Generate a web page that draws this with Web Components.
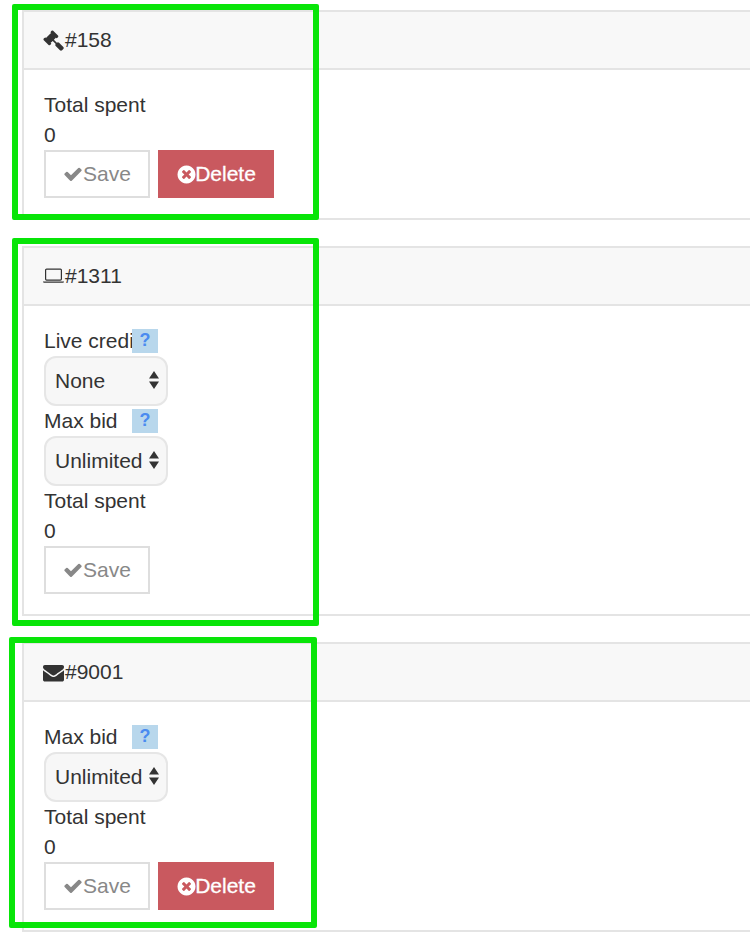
<!DOCTYPE html>
<html>
<head>
<meta charset="utf-8">
<style>
    html, body { margin: 0; background: #fff; }
    body { font: 21px/30px "Liberation Sans", Arial, sans-serif; color: #333; }
</style>
</head>
<body>
<budget-page>
    <budget-panel number="158" icon="gavel">
        <stat-block label="Total spent" value="0"></stat-block>
        <button-row>
            <action-button icon="check">Save</action-button>
            <action-button icon="cross" danger>Delete</action-button>
        </button-row>
        <green-mark x="-12" y="-8" w="307" h="216"></green-mark>
    </budget-panel>
    <budget-panel number="1311" icon="laptop">
        <help-label>Live credit</help-label>
        <select-box>None</select-box>
        <help-label>Max bid</help-label>
        <select-box>Unlimited</select-box>
        <stat-block label="Total spent" value="0"></stat-block>
        <button-row>
            <action-button icon="check">Save</action-button>
        </button-row>
        <green-mark x="-12" y="-10" w="307" h="388"></green-mark>
    </budget-panel>
    <budget-panel number="9001" icon="envelope">
        <help-label>Max bid</help-label>
        <select-box>Unlimited</select-box>
        <stat-block label="Total spent" value="0"></stat-block>
        <button-row>
            <action-button icon="check">Save</action-button>
            <action-button icon="cross" danger>Delete</action-button>
        </button-row>
        <green-mark x="-15" y="-7" w="308" h="291"></green-mark>
    </budget-panel>
</budget-page>

<script>
const ICONS = {
    gavel: '<svg viewBox="0 0 1792 1792" width="21" height="21"><path fill="currentColor" d="M1771 1536q0 53-37 90l-107 108q-39 37-91 37-53 0-90-37l-363-364q-38-36-38-90 0-53 43-96l-256-256-126 126q-14 14-34 14t-34-14q2 2 12.5 12t12.5 13 10 11.5 10 13.5 6 13.5 5.5 16.5 1.5 18q0 38-28 68-3 3-16.5 18t-19 20.5-18.5 16.5-22 15.5-22 9-26 4.5q-40 0-68-28l-408-408q-28-28-28-68 0-13 4.5-26t9-22 15.5-22 16.5-18.5 20.5-19 18-16.5q30-28 68-28 10 0 18 1.5t16.5 5.5 13.5 6 13.5 10 11.5 10 13 12.5 12 12.5q-14-14-14-34t14-34l348-348q14-14 34-14t34 14q-2-2-12.5-12t-12.5-13-10-11.5-10-13.5-6-13.5-5.5-16.5-1.5-18q0-38 28-68 3-3 16.5-18t19-20.5 18.5-16.5 22-15.5 22-9 26-4.5q40 0 68 28l408 408q28 28 28 68 0 13-4.5 26t-9 22-15.5 22-16.5 18.5-20.5 19-18 16.5q-30 28-68 28-10 0-18-1.5t-16.5-5.5-13.5-6-13.5-10-11.5-10-13-12.5-12-12.5q14 14 14 34t-14 34l-126 126 256 256q43-43 96-43 52 0 91 37l363 363q37 39 37 91z"/></svg>',
    laptop: '<svg viewBox="0 0 21 16" width="21" height="16"><rect x="2.6" y="1.1" width="15.8" height="11" rx="1" fill="none" stroke="currentColor" stroke-width="1.2"/><path d="M0 13.4h21v.3q0 1-1.2 1H1.2q-1.2 0-1.2-1z" fill="currentColor"/></svg>',
    envelope: '<svg viewBox="0 0 1792 1792" width="21" height="21"><path fill="currentColor" d="M1792 710v794q0 66-47 113t-113 47h-1472q-66 0-113-47t-47-113v-794q44 49 101 87 362 246 497 345 57 42 92.5 65.5t94.5 48 110 24.5h2q51 0 110-24.5t94.5-48 92.5-65.5q170-123 498-345 57-39 100-87zm0-294q0 79-49 151t-122 123q-376 261-468 325-10 7-42.5 30.5t-54 38-52 32.5-57.5 27-50 9h-2q-23 0-50-9t-57.5-27-52-32.5-54-38-42.5-30.5q-91-64-262-182.5t-205-142.5q-62-42-117-115.5t-55-136.5q0-78 41.5-130t118.5-52h1472q65 0 112.5 47t47.5 113z"/></svg>',
    check: '<svg viewBox="0 0 1792 1792" width="20" height="20"><path fill="currentColor" d="M1671 566q0 40-28 68l-724 724-136 136q-28 28-68 28t-68-28l-136-136-362-362q-28-28-28-68t28-68l136-136q28-28 68-28t68 28l294 295 656-657q28-28 68-28t68 28l136 136q28 28 28 68z"/></svg>',
    cross: '<svg viewBox="0 0 1792 1792" width="21" height="21"><path fill="currentColor" d="M1277 1122q0-26-19-45l-181-181 181-181q19-19 19-45 0-27-19-46l-90-90q-19-19-46-19-26 0-45 19l-181 181-181-181q-19-19-45-19-27 0-46 19l-90 90q-19 19-19 46 0 26 19 45l181 181-181 181q-19 19-19 45 0 27 19 46l90 90q19 19 46 19 26 0 45-19l181-181 181 181q19 19 45 19 27 0 46-19l90-90q19-19 19-46zm387-226q0 209-103 385.5t-279.5 279.5-385.5 103-385.5-103-279.5-279.5-103-385.5 103-385.5 279.5-279.5 385.5-103 385.5 103 279.5 279.5 103 385.5z"/></svg>',
    arrows: '<svg viewBox="0 0 10 18" width="10" height="18"><path fill="currentColor" d="M5 0l5 7.5H0zM5 18L0 10.5h10z"/></svg>'
};

class BudgetPage extends HTMLElement {
    constructor() {
        super();
        this.attachShadow({ mode: "open" });
        this.shadowRoot.innerHTML = `
            <style>
                :host {
                    display: flex;
                    flex-direction: column;
                    gap: 26px;
                    padding: 10px 0 0 22px;
                }
            </style>
            <slot></slot>
        `;
    }
}

class BudgetPanel extends HTMLElement {
    constructor() {
        super();
        this.attachShadow({ mode: "open" });
        const icon = ICONS[this.getAttribute("icon")];
        this.shadowRoot.innerHTML = `
            <style>
                :host {
                    display: block;
                    position: relative;
                    border: 2px solid #e4e4e4;
                    border-right: 0;
                    background: #fff;
                }
                header {
                    display: flex;
                    align-items: center;
                    height: 56px;
                    padding-left: 20px;
                    background: #f8f8f8;
                    border-bottom: 2px solid #e4e4e4;
                    color: #333;
                }
                .icon { display: flex; width: 21px; margin-left: -1px; margin-right: 1px; }
                main { padding: 20px; }
            </style>
            <header>
                <span class="icon">${icon}</span>
                <span>#${this.getAttribute("number")}</span>
            </header>
            <main><slot></slot></main>
        `;
    }
}

class HelpLabel extends HTMLElement {
    constructor() {
        super();
        this.attachShadow({ mode: "open" });
        this.shadowRoot.innerHTML = `
            <style>
                :host {
                    display: flex;
                    align-items: center;
                    height: 30px;
                }
                .text {
                    width: 88px;
                    overflow: hidden;
                    white-space: nowrap;
                }
                .help {
                    width: 26px;
                    height: 24px;
                    background: #b8d7ec;
                    color: #4a8bf0;
                    font-size: 18px;
                    font-weight: bold;
                    line-height: 22px;
                    text-align: center;
                }
            </style>
            <span class="text"><slot></slot></span>
            <span class="help">?</span>
        `;
    }
}

class SelectBox extends HTMLElement {
    constructor() {
        super();
        this.attachShadow({ mode: "open" });
        this.shadowRoot.innerHTML = `
            <style>
                :host {
                    display: flex;
                    align-items: center;
                    justify-content: space-between;
                    box-sizing: border-box;
                    width: 124px;
                    height: 50px;
                    padding: 0 7px 0 9px;
                    background: #f7f7f7;
                    border: 2px solid #e6e6e6;
                    border-radius: 12px;
                }
                svg { display: block; margin-top: -2px; }
            </style>
            <span><slot></slot></span>
            ${ICONS.arrows}
        `;
    }
}

class StatBlock extends HTMLElement {
    constructor() {
        super();
        this.attachShadow({ mode: "open" });
        this.shadowRoot.innerHTML = `
            <style>
                :host { display: block; }
                div { height: 30px; }
            </style>
            <div>${this.getAttribute("label")}</div>
            <div>${this.getAttribute("value")}</div>
        `;
    }
}

class ButtonRow extends HTMLElement {
    constructor() {
        super();
        this.attachShadow({ mode: "open" });
        this.shadowRoot.innerHTML = `
            <style>
                :host { display: flex; gap: 8px; }
            </style>
            <slot></slot>
        `;
    }
}

class ActionButton extends HTMLElement {
    constructor() {
        super();
        this.attachShadow({ mode: "open" });
        this.shadowRoot.innerHTML = `
            <style>
                :host {
                    display: flex;
                    align-items: center;
                    justify-content: center;
                    box-sizing: border-box;
                    width: 106px;
                    height: 48px;
                    background: #fff;
                    border: 2px solid #dedede;
                    color: #888;
                }
                :host([danger]) {
                    width: 116px;
                    background: #c9595f;
                    border-color: #c9595f;
                    color: #fff;
                    -webkit-text-stroke: 0.3px #fff;
                }
                :host([danger]) svg { margin-right: -2px; }
                svg { display: block; }
            </style>
            ${ICONS[this.getAttribute("icon")]}
            <slot></slot>
        `;
    }
}

// annotation drawn over the screenshot, offsets are from the panel's box
class GreenMark extends HTMLElement {
    constructor() {
        super();
        this.attachShadow({ mode: "open" });
        this.shadowRoot.innerHTML = `
            <style>
                :host {
                    display: block;
                    position: absolute;
                    box-sizing: border-box;
                    left: ${this.getAttribute("x")}px;
                    top: ${this.getAttribute("y")}px;
                    width: ${this.getAttribute("w")}px;
                    height: ${this.getAttribute("h")}px;
                    border: 6px solid #08e508;
                    border-radius: 2px;
                    pointer-events: none;
                }
            </style>
        `;
    }
}

customElements.define("budget-page", BudgetPage);
customElements.define("budget-panel", BudgetPanel);
customElements.define("help-label", HelpLabel);
customElements.define("select-box", SelectBox);
customElements.define("stat-block", StatBlock);
customElements.define("button-row", ButtonRow);
customElements.define("action-button", ActionButton);
customElements.define("green-mark", GreenMark);
</script>
</body>
</html>
